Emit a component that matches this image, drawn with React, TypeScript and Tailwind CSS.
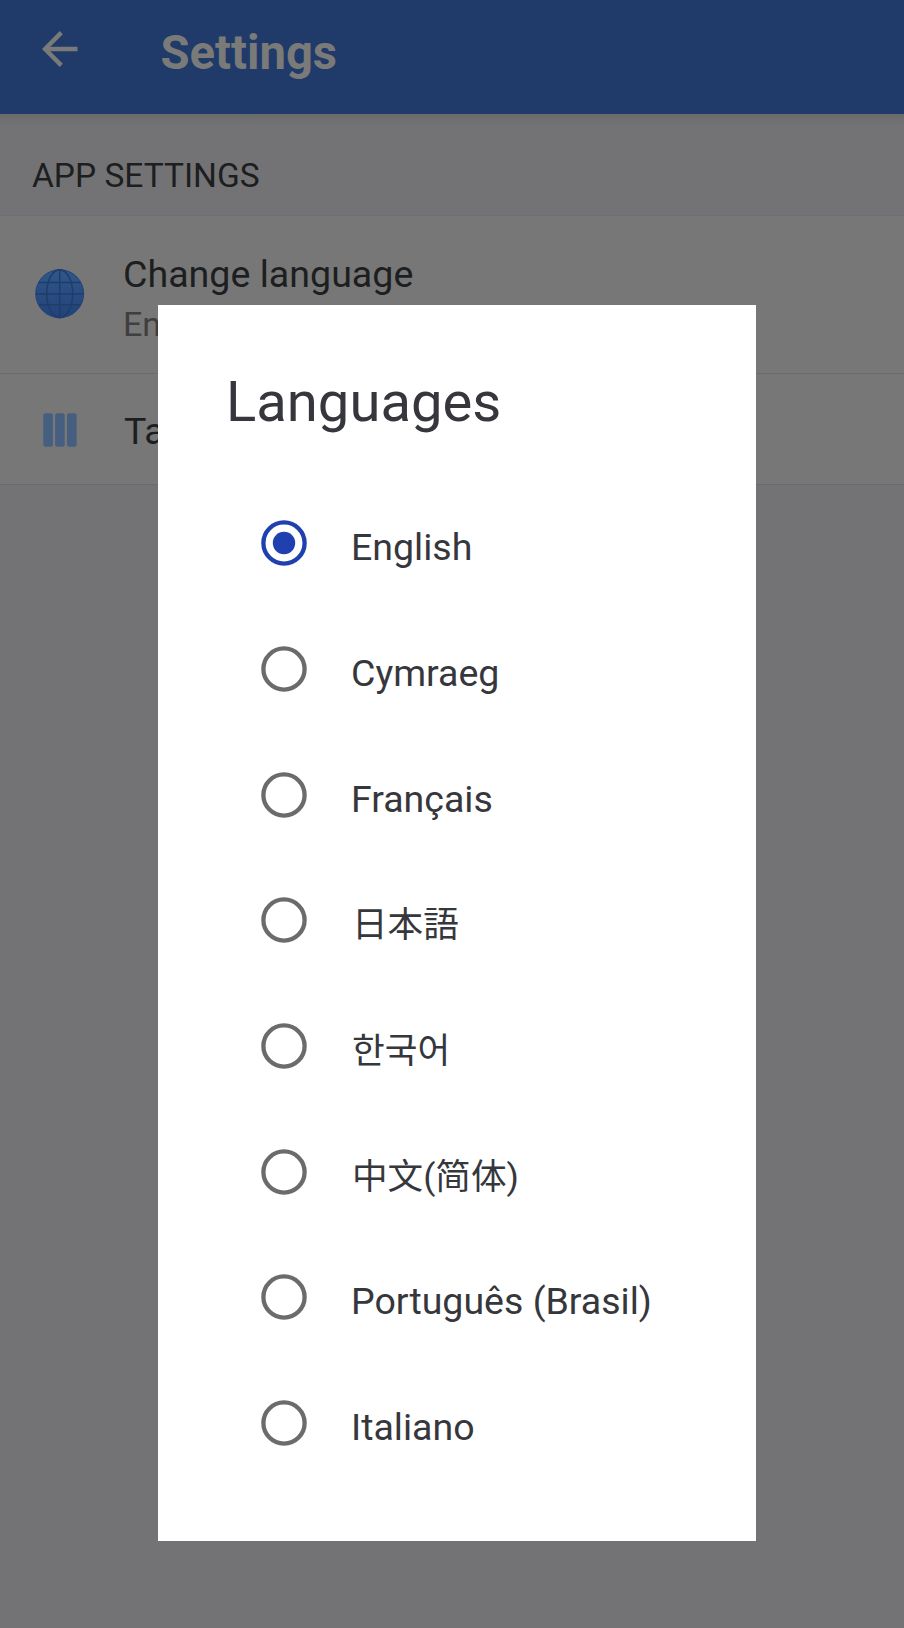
import React, { useState } from 'react';
import clsx from 'clsx';

interface Language {
  code: string;
  label: string;
  cjk?: boolean;
}

const LANGUAGES: Language[] = [
  { code: 'en', label: 'English' },
  { code: 'cy', label: 'Cymraeg' },
  { code: 'fr', label: 'Français' },
  { code: 'ja', label: '日本語', cjk: true },
  { code: 'ko', label: '한국어', cjk: true },
  { code: 'zh-Hans', label: '中文(简体)', cjk: true },
  { code: 'pt-BR', label: 'Português (Brasil)' },
  { code: 'it', label: 'Italiano' },
];

const BackArrow = () => (
  <svg width="36" height="36" viewBox="0 0 36 36" fill="none" stroke="#7a7a79" strokeWidth="4.4">
    <path d="M35.5 18H3.5M19.3 1.6L3 18L19.3 34.4" />
  </svg>
);

const GlobeIcon = () => (
  <svg width="50" height="50" viewBox="0 0 50 50" fill="none" stroke="#1f3d6b" strokeWidth="1.5">
    <defs>
      <linearGradient id="globe" x1="0" y1="0" x2="0" y2="1">
        <stop offset="0" stopColor="#315788" />
        <stop offset="1" stopColor="#224278" />
      </linearGradient>
    </defs>
    <circle cx="24.7" cy="24.7" r="24" fill="url(#globe)" stroke="#23447a" strokeWidth="1" />
    <ellipse cx="24.7" cy="24.7" rx="13" ry="24" />
    <path d="M24.7 1V49M1 25H48.5M4 13.5H45.5M4 35.7H45.5" />
  </svg>
);

const ColumnsIcon = () => (
  <svg width="34" height="34" viewBox="0 0 34 34" fill="#465f80">
    <rect x="0.3" y="0.3" width="9.6" height="33.4" rx="2" />
    <rect x="12.1" y="0.3" width="9.6" height="33.4" rx="2" />
    <rect x="24" y="0.3" width="9.6" height="33.4" rx="2" />
  </svg>
);

const Radio = ({ checked }: { checked: boolean }) => (
  <svg width="46" height="46" viewBox="0 0 46 46" fill="none">
    <circle cx="23" cy="23" r="20.6" stroke={checked ? '#1f40ae' : '#6b6b6b'} strokeWidth="4.3" />
    {checked && <circle cx="23" cy="23" r="11.2" fill="#1f40ae" />}
  </svg>
);

export default function App() {
  const [selected, setSelected] = useState('en');

  return (
    <div className="relative h-[1628px] w-[904px] overflow-hidden bg-[#737375] font-[Roboto,'Noto_Sans_CJK_JP',sans-serif] text-[#1d1e20]">
      <header className="flex h-[114px] items-start bg-[#203b6a] pl-[42px]">
        <button className="mt-[30.5px]" aria-label="Back">
          <BackArrow />
        </button>
        <h1 className="mt-[25px] ml-[82.5px] text-[47.2px] leading-[56px] font-bold text-[#7a7a79]">Settings</h1>
      </header>

      <div className="h-[102px] border-b border-[#6e6e6e] bg-linear-to-b from-[#696c6b] to-[#737375] to-12% pt-[42px] pl-[32px] text-[33.5px] leading-[40px]">
        APP SETTINGS
      </div>

      <div className="flex h-[158px] border-b border-[#6c6c6c] bg-[#777777] pl-[35px]">
        <div className="mt-[53px]">
          <GlobeIcon />
        </div>
        <div className="ml-[38px] pt-[36px]">
          <div className="text-[37.6px] leading-[44px]">Change language</div>
          <div className="mt-[8px] text-[34px] leading-[40px] text-[#3f3f3f]">English</div>
        </div>
      </div>
      <div className="flex h-[111px] border-b border-[#6a6a6c] bg-[#777777] pl-[43px]">
        <div className="mt-[39px]">
          <ColumnsIcon />
        </div>
        <div className="ml-[47px] pt-[35px] text-[37.6px] leading-[44px]">Tabs</div>
      </div>

      <div role="dialog" className="absolute top-[305px] left-[158px] h-[1236px] w-[598px] bg-white text-[#36373c]">
        <h2 className="pt-[65px] pl-[68px] text-[56.2px] leading-[64px]">Languages</h2>
        <div className="mt-[46.5px] flex flex-col">
          {LANGUAGES.map(({ code, label, cjk }) => (
            <button
              key={code}
              role="radio"
              aria-checked={selected === code}
              onClick={() => setSelected(code)}
              className="flex h-[125.7px] items-center gap-[44px] pl-[103px] text-left"
            >
              <Radio checked={selected === code} />
              <span
                lang={code}
                className={clsx('leading-[44px]', cjk ? 'pt-2.5 pl-px text-[35.6px]' : 'pt-2 text-[37.5px]')}
              >
                {label}
              </span>
            </button>
          ))}
        </div>
      </div>
    </div>
  );
}
